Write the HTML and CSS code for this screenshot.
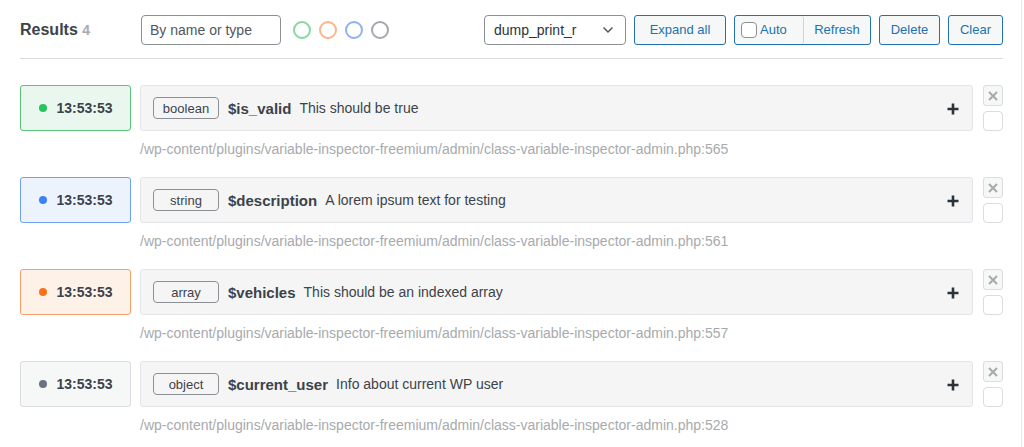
FILE: index.html
```html
<!DOCTYPE html>
<html lang="en">
<head>
    <meta charset="UTF-8">
    <meta name="viewport" content="width=device-width, initial-scale=1.0">
    <title>Variable Inspector</title>
    <link rel="stylesheet" href="styles.css">
</head>
<body>

    <div class="inspector">
        <!-- Toolbar -->
        <div class="toolbar">
            <h2 class="results-title">Results <span class="results-count">4</span></h2>
            <input type="text" class="search-field" placeholder="By name or type">
            <div class="color-filters">
                <span class="filter-circle green"></span>
                <span class="filter-circle orange"></span>
                <span class="filter-circle blue"></span>
                <span class="filter-circle gray"></span>
            </div>

            <div class="toolbar-actions">
                <div class="select-box">
                    <span>dump_print_r</span>
                    <svg width="12" height="8" viewBox="0 0 12 8"><path d="M1.5 1.5 L6 6 L10.5 1.5" fill="none" stroke="#50575e" stroke-width="1.5"/></svg>
                </div>
                <button class="btn btn-expand">Expand all</button>
                <div class="btn-group">
                    <label class="btn btn-auto"><span class="auto-check"></span>Auto</label>
                    <button class="btn btn-refresh">Refresh</button>
                </div>
                <button class="btn btn-delete">Delete</button>
                <button class="btn btn-clear">Clear</button>
            </div>
        </div>

        <!-- Results -->
        <div class="result">
            <div class="result-row">
                <div class="time-box green"><span class="dot"></span>13:53:53</div>
                <div class="var-box">
                    <span class="type-badge">boolean</span>
                    <span class="var-name">$is_valid</span>
                    <span class="var-desc">This should be true</span>
                    <svg class="expand-icon" width="12" height="12" viewBox="0 0 12 12"><path d="M6 0.5 V11.5 M0.5 6 H11.5" stroke="#2c3338" stroke-width="2.6"/></svg>
                </div>
                <div class="row-controls">
                    <span class="remove-btn"><svg width="10" height="10" viewBox="0 0 10 10"><path d="M1 1 L9 9 M9 1 L1 9" stroke="#a7aaad" stroke-width="2"/></svg></span>
                    <span class="row-check"></span>
                </div>
            </div>
            <div class="result-path">/wp-content/plugins/variable-inspector-freemium/admin/class-variable-inspector-admin.php:565</div>
        </div>

        <div class="result">
            <div class="result-row">
                <div class="time-box blue"><span class="dot"></span>13:53:53</div>
                <div class="var-box">
                    <span class="type-badge">string</span>
                    <span class="var-name">$description</span>
                    <span class="var-desc">A lorem ipsum text for testing</span>
                    <svg class="expand-icon" width="12" height="12" viewBox="0 0 12 12"><path d="M6 0.5 V11.5 M0.5 6 H11.5" stroke="#2c3338" stroke-width="2.6"/></svg>
                </div>
                <div class="row-controls">
                    <span class="remove-btn"><svg width="10" height="10" viewBox="0 0 10 10"><path d="M1 1 L9 9 M9 1 L1 9" stroke="#a7aaad" stroke-width="2"/></svg></span>
                    <span class="row-check"></span>
                </div>
            </div>
            <div class="result-path">/wp-content/plugins/variable-inspector-freemium/admin/class-variable-inspector-admin.php:561</div>
        </div>

        <div class="result">
            <div class="result-row">
                <div class="time-box orange"><span class="dot"></span>13:53:53</div>
                <div class="var-box">
                    <span class="type-badge">array</span>
                    <span class="var-name">$vehicles</span>
                    <span class="var-desc">This should be an indexed array</span>
                    <svg class="expand-icon" width="12" height="12" viewBox="0 0 12 12"><path d="M6 0.5 V11.5 M0.5 6 H11.5" stroke="#2c3338" stroke-width="2.6"/></svg>
                </div>
                <div class="row-controls">
                    <span class="remove-btn"><svg width="10" height="10" viewBox="0 0 10 10"><path d="M1 1 L9 9 M9 1 L1 9" stroke="#a7aaad" stroke-width="2"/></svg></span>
                    <span class="row-check"></span>
                </div>
            </div>
            <div class="result-path">/wp-content/plugins/variable-inspector-freemium/admin/class-variable-inspector-admin.php:557</div>
        </div>

        <div class="result">
            <div class="result-row">
                <div class="time-box gray"><span class="dot"></span>13:53:53</div>
                <div class="var-box">
                    <span class="type-badge">object</span>
                    <span class="var-name">$current_user</span>
                    <span class="var-desc">Info about current WP user</span>
                    <svg class="expand-icon" width="12" height="12" viewBox="0 0 12 12"><path d="M6 0.5 V11.5 M0.5 6 H11.5" stroke="#2c3338" stroke-width="2.6"/></svg>
                </div>
                <div class="row-controls">
                    <span class="remove-btn"><svg width="10" height="10" viewBox="0 0 10 10"><path d="M1 1 L9 9 M9 1 L1 9" stroke="#a7aaad" stroke-width="2"/></svg></span>
                    <span class="row-check"></span>
                </div>
            </div>
            <div class="result-path">/wp-content/plugins/variable-inspector-freemium/admin/class-variable-inspector-admin.php:528</div>
        </div>
    </div>

</body>
</html>
```

FILE: styles.css
```css
* {
    margin: 0;
    padding: 0;
    box-sizing: border-box;
}

body {
    font-family: 'Liberation Sans', Arial, sans-serif;
    background-color: #fff;
    color: #3c434a;
    height: 100vh;
    overflow: hidden;
}

.inspector {
    width: 1022px;
    height: 100%;
    padding: 0 18px 0 20px;
    border-right: 1px solid #e8e8e8;
}

/* Toolbar */
.toolbar {
    display: flex;
    align-items: center;
    height: 59px;
    padding-top: 1px;
    border-bottom: 1px solid #dcdcde;
}

.results-title {
    font-size: 16px;
    font-weight: 700;
    color: #3c434a;
    width: 121px;
}

.results-count {
    font-size: 14px;
    color: #a7aaad;
    font-weight: 700;
}

.search-field {
    width: 140px;
    height: 30px;
    padding: 0 8px;
    border: 1px solid #8c8f94;
    border-radius: 4px;
    font-family: inherit;
    font-size: 14px;
    color: #2c3338;
}

.search-field::placeholder {
    color: #50575e;
}

.color-filters {
    display: flex;
    gap: 8px;
    margin-left: 12px;
}

.filter-circle {
    width: 18px;
    height: 18px;
    border-radius: 50%;
    border: 2px solid #a0a5aa;
}

.filter-circle.green { border-color: #86d79c; }
.filter-circle.orange { border-color: #fdb48a; }
.filter-circle.blue { border-color: #8fb0f7; }
.filter-circle.gray { border-color: #a4a7ae; }

.toolbar-actions {
    display: flex;
    gap: 8px;
    margin-left: auto;
}

.select-box {
    width: 142px;
    height: 30px;
    display: flex;
    align-items: center;
    justify-content: space-between;
    padding: 0 11px 0 9px;
    border: 1px solid #8c8f94;
    border-radius: 4px;
    font-size: 14px;
    color: #2c3338;
}

.btn {
    height: 30px;
    display: flex;
    align-items: center;
    justify-content: center;
    padding: 0 10px;
    border: 1px solid #2271b1;
    border-radius: 3px;
    background-color: #f6f7f7;
    color: #2271b1;
    font-family: inherit;
    font-size: 13px;
    cursor: pointer;
}

.btn-expand { width: 92px; }
.btn-delete { width: 61px; }
.btn-clear { width: 55px; }

.btn-group {
    display: flex;
    border: 1px solid #2271b1;
    border-radius: 3px;
    background-color: #f6f7f7;
}

.btn-group .btn {
    border: none;
    height: 28px;
    background: none;
}

.btn-auto {
    width: 69px;
    padding: 0 0 0 6px;
    justify-content: flex-start;
    gap: 3px;
    border-right: 1px solid #c3d7ea !important;
}

.auto-check {
    width: 16px;
    height: 16px;
    border: 1px solid #8c8f94;
    border-radius: 4px;
    background-color: #fff;
}

.btn-refresh { width: 66px; }

/* Results */
.result {
    margin-top: 26px;
}

.result + .result {
    margin-top: 19px;
}

.result-row {
    display: flex;
    height: 46px;
}

.time-box {
    width: 111px;
    display: flex;
    align-items: center;
    justify-content: center;
    gap: 9px;
    padding-left: 1px;
    border: 1px solid #dcdcde;
    border-radius: 3px;
    background-color: #f6f7f7;
    font-size: 14px;
    font-weight: 700;
    color: #3c434a;
}

.dot {
    width: 8px;
    height: 8px;
    border-radius: 50%;
    background-color: #6b7280;
}

.time-box.green { border-color: #5cc27a; background-color: #eaf7ee; }
.time-box.green .dot { background-color: #22c55e; }
.time-box.blue { border-color: #6f9ff0; background-color: #edf3fd; }
.time-box.blue .dot { background-color: #3b82f6; }
.time-box.orange { border-color: #f5a06a; background-color: #fef1e8; }
.time-box.orange .dot { background-color: #f97316; }
.time-box.gray .dot { background-color: #6b7280; }

.var-box {
    flex: 1;
    display: flex;
    align-items: center;
    margin: 0 10px 0 9px;
    padding: 0 13px 0 12px;
    border: 1px solid #e2e4e7;
    border-radius: 3px;
    background-color: #f5f5f5;
}

.type-badge {
    width: 66px;
    height: 22px;
    display: flex;
    align-items: center;
    justify-content: center;
    border: 1px solid #8c8f94;
    border-radius: 4px;
    font-size: 13px;
    color: #3c434a;
}

.var-name {
    margin-left: 9px;
    font-size: 15px;
    font-weight: 700;
    color: #3c434a;
}

.var-desc {
    margin-left: 8px;
    font-size: 14px;
    color: #3c434a;
}

.expand-icon {
    margin-left: auto;
    margin-top: 2px;
}

.row-controls {
    width: 20px;
    display: flex;
    flex-direction: column;
    gap: 5px;
}

.remove-btn {
    height: 21px;
    display: flex;
    align-items: center;
    justify-content: center;
    border: 1px solid #dcdcde;
    border-radius: 3px;
    background-color: #f6f7f7;
}

.row-check {
    height: 20px;
    border: 1px solid #dcdcde;
    border-radius: 4px;
    background-color: #fff;
}

.result-path {
    margin-left: 120px;
    margin-top: 9px;
    font-size: 14px;
    line-height: 18px;
    color: #a7aaad;
}
```
